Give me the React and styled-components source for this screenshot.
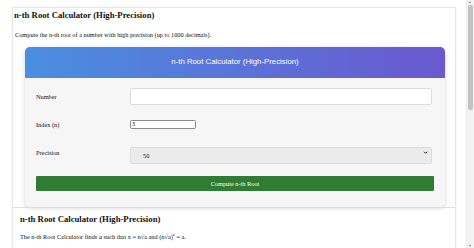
import React, { useState } from 'react';
import styled, { createGlobalStyle } from 'styled-components';

const GlobalStyle = createGlobalStyle`
  html, body {
    margin: 0;
    padding: 0;
    background: #fff;
    overflow: hidden;
  }
  body {
    font-family: "Liberation Serif", "Times New Roman", serif;
    color: #111;
  }
`;

const Page = styled.div`
  padding: 7px 0 0 12px;
  height: 248px;
  box-sizing: border-box;
  overflow: hidden;
`;

const Wrapper = styled.div`
  width: 444px;
  box-sizing: border-box;
  border: 1px solid #e6e6e6;
  border-bottom: none;
  box-shadow: 0 0 3px rgba(0, 0, 0, 0.06);
  background: #fff;
`;

const Intro = styled.section`
  padding: 2px 10px 0 1px;
`;

const Title = styled.h1`
  margin: 0;
  font-size: 8.7px;
  line-height: 11px;
  font-weight: bold;
`;

const Lead = styled.p`
  margin: 10px 0 0 1px;
  font-size: 6.3px;
  line-height: 8px;
`;

const Card = styled.div`
  margin: 8px 0 0 12px;
  width: 420px;
  background: #f6f6f6;
  border-radius: 5px;
  box-shadow: 0 1px 4px rgba(0, 0, 0, 0.18);
  overflow: hidden;
`;

const CardHeader = styled.div`
  height: 31px;
  display: flex;
  align-items: center;
  justify-content: center;
  background: linear-gradient(90deg, #4a8fe0, #6a58cf);
  color: #fff;
  font-family: "Liberation Sans", Arial, sans-serif;
  font-size: 7.8px;
  padding-bottom: 2px;
  box-sizing: border-box;
`;

const CardBody = styled.div`
  padding: 4px 11px 16px 11px;
`;

const Row = styled.div`
  display: grid;
  grid-template-columns: 94px 302px;
  align-items: center;
  height: 28px;
`;

const Label = styled.label`
  font-size: 6.3px;
`;

const TextInput = styled.input`
  box-sizing: border-box;
  height: ${p => p.$small ? 9 : 17}px;
  width: ${p => p.$small ? 66 : 302}px;
  border: 1px solid ${p => p.$small ? '#8a8a8a' : '#dcdcdc'};
  border-radius: ${p => p.$small ? 1.5 : 2}px;
  background: #fff;
  font-family: "Liberation Serif", serif;
  font-size: 6px;
  padding: 0 1px;
  outline: none;
`;

const SelectWrap = styled.div`
  position: relative;
  width: 302px;
  height: 17px;
`;

const Select = styled.select`
  appearance: none;
  box-sizing: border-box;
  width: 100%;
  height: 100%;
  border: 1px solid #dcdcdc;
  border-radius: 2px;
  background: #ebebeb;
  padding: 0 0 0 12px;
  font-family: "Liberation Serif", serif;
  font-size: 6.3px;
  color: #111;
  outline: none;
`;

const Chevron = styled.svg`
  position: absolute;
  right: 4px;
  top: 6px;
  width: 5px;
  height: 5px;
  pointer-events: none;
`;

const Button = styled.button`
  display: block;
  width: 398px;
  height: 15px;
  margin-top: 10px;
  border: none;
  border-radius: 1px;
  background: #2e7d32;
  color: #fff;
  font-family: "Liberation Serif", serif;
  font-size: 6.3px;
  padding: 0;
  cursor: pointer;
`;

const Info = styled.section`
  border-top: 1px solid #dedede;
  padding: 6px 8px 20px 7px;
`;

const Text = styled.p`
  margin: 6px 0 0 0;
  font-size: 6.3px;
  line-height: 8px;
`;

const ScrollTrack = styled.div`
  position: fixed;
  top: 0;
  right: 0;
  width: 7px;
  height: 100%;
  background: #f3f3f3;
  border-left: 1px solid #ebebeb;
`;

const ScrollThumb = styled.div`
  position: absolute;
  top: 5px;
  left: 1px;
  width: 5px;
  height: 105px;
  border-radius: 2px;
  background: #c3c3c3;
`;

const ScrollArrow = styled.div`
  position: absolute;
  left: 2px;
  width: 0;
  height: 0;
  border-left: 1.5px solid transparent;
  border-right: 1.5px solid transparent;
  ${p => p.$down
    ? 'bottom: 1px; border-top: 2px solid #777;'
    : 'top: 1px; border-bottom: 2px solid #777;'}
`;

export default function App() {
  const [number, setNumber] = useState('');
  const [index, setIndex] = useState('3');
  const [precision, setPrecision] = useState('50');

  return (
    <>
      <GlobalStyle />
      <Page>
        <Wrapper>
          <Intro>
            <Title>n-th Root Calculator (High-Precision)</Title>
            <Lead>Compute the n-th root of a number with high precision (up to 1000 decimals).</Lead>
          </Intro>
          <Card>
            <CardHeader>n-th Root Calculator (High-Precision)</CardHeader>
            <CardBody>
              <Row>
                <Label>Number</Label>
                <TextInput value={number} onChange={e => setNumber(e.target.value)} />
              </Row>
              <Row>
                <Label>Index (n)</Label>
                <TextInput $small value={index} onChange={e => setIndex(e.target.value)} />
              </Row>
              <Row>
                <Label>Precision</Label>
                <SelectWrap>
                  <Select value={precision} onChange={e => setPrecision(e.target.value)}>
                    <option value="10">10</option>
                    <option value="50">50</option>
                    <option value="100">100</option>
                    <option value="500">500</option>
                    <option value="1000">1000</option>
                  </Select>
                  <Chevron viewBox="0 0 10 10">
                    <path d="M2 3.5 L5 6.5 L8 3.5" fill="none" stroke="#222" strokeWidth="2" />
                  </Chevron>
                </SelectWrap>
              </Row>
              <Button>Compute n-th Root</Button>
            </CardBody>
          </Card>
          <Info>
            <Title>n-th Root Calculator (High-Precision)</Title>
            <Text>The n-th Root Calculator finds <em>a</em> such that x = n√a and (n√a)<sup style={{ fontSize: '4px' }}>n</sup> = a.</Text>
          </Info>
        </Wrapper>
      </Page>
      <ScrollTrack>
        <ScrollArrow />
        <ScrollThumb />
        <ScrollArrow $down />
      </ScrollTrack>
    </>
  );
}
